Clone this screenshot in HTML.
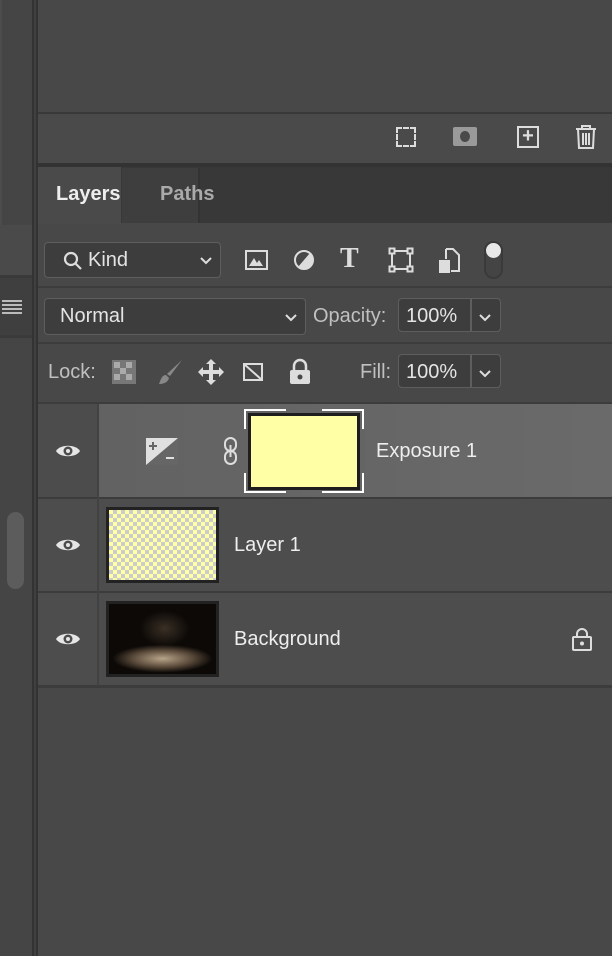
<!DOCTYPE html>
<html><head><style>
*{margin:0;padding:0;box-sizing:border-box}
body{width:612px;height:956px;background:#484848;position:relative;overflow:hidden;font-family:"Liberation Sans",sans-serif;color:#e6e6e6}
.a{position:absolute}
.drop{position:absolute;background:#3d3d3d;border:1px solid #5e5e5e;border-radius:4px}
.eye{position:absolute;left:55px;width:26px;height:16px}
.txt{font-size:18px;color:#e4e4e4}
</style></head><body>
<div class="a" style="left:0;top:0;width:32px;height:956px;background:#454545"></div>
<div class="a" style="left:0;top:0;width:2px;height:225px;background:#4c4c4c"></div>
<div class="a" style="left:0;top:225px;width:32px;height:50px;background:#4a4a4a"></div>
<div class="a" style="left:0;top:275px;width:32px;height:3px;background:#3a3a3a"></div>
<div class="a" style="left:0;top:278px;width:32px;height:57px;background:#3f3f3f"></div>
<div class="a" style="left:2px;top:300px;width:20px;height:14px;border-top:2px solid #bbb;border-bottom:2px solid #bbb"></div>
<div class="a" style="left:2px;top:304px;width:20px;height:6px;border-top:2px solid #bbb;border-bottom:2px solid #bbb"></div>
<div class="a" style="left:0;top:335px;width:32px;height:3px;background:#3a3a3a"></div>
<div class="a" style="left:7px;top:512px;width:17px;height:77px;border-radius:9px;background:#5c5c5c"></div>
<div class="a" style="left:32px;top:0;width:6px;height:956px;background:#333"></div>
<div class="a" style="left:34px;top:0;width:2px;height:956px;background:#404040"></div>
<div class="a" style="left:38px;top:112px;width:574px;height:2px;background:#393939"></div>
<div class="a" style="left:38px;top:114px;width:574px;height:49px;background:#4a4a4a"></div>
<div class="a" style="left:396px;top:127px;width:20px;height:20px;border:2px dashed #ddd"></div>
<div class="a" style="left:453px;top:127px;width:24px;height:19px;background:#9a9a9a;border-radius:2px"><div class="a" style="left:7px;top:4px;width:10px;height:11px;border-radius:50%;background:#4a4a4a"></div></div>
<div class="a" style="left:517px;top:126px;width:22px;height:22px;border:2px solid #ddd;color:#ddd;font-size:20px;font-weight:bold;line-height:17px;text-align:center">+</div>
<svg class="a" style="left:574px;top:124px" width="24" height="26" viewBox="0 0 24 26" fill="none" stroke="#ddd" stroke-width="2"><path d="M2 5h20M8 5V2h8v3M4 5l1 19h14l1-19M9 9v12M12 9v12M15 9v12"/></svg>
<div class="a" style="left:38px;top:163px;width:574px;height:4px;background:#333"></div>
<div class="a" style="left:38px;top:167px;width:574px;height:56px;background:#383838"></div>
<div class="a" style="left:38px;top:167px;width:83px;height:57px;background:#4a4a4a"></div>
<div class="a" style="left:122px;top:168px;width:78px;height:55px;background:#3e3e3e;border-right:2px solid #333"></div>
<div class="a" style="left:56px;top:183px;font-size:20px;font-weight:bold;color:#eee">Layers</div>
<div class="a" style="left:160px;top:183px;font-size:20px;font-weight:bold;color:#aaa">Paths</div>
<div class="drop" style="left:44px;top:242px;width:177px;height:36px"></div>
<svg class="a" style="left:62px;top:250px" width="22" height="22" viewBox="0 0 22 22" fill="none" stroke="#ddd" stroke-width="2.2"><circle cx="9" cy="9" r="6"/><path d="M13 13l6 6"/></svg>
<div class="a txt" style="left:88px;top:249px;font-size:20px">Kind</div>
<svg class="a" style="left:199px;top:256px" width="14" height="10"><path d="M2 2l5 5 5-5" fill="none" stroke="#ddd" stroke-width="2"/></svg>
<svg class="a" style="left:244px;top:248px" width="26" height="24"><rect x="2" y="3" width="21" height="18" fill="none" stroke="#ddd" stroke-width="2"/><path d="M5 18l5-8 3 5 2-3 4 6z" fill="#ddd"/></svg>
<svg class="a" style="left:292px;top:248px" width="24" height="24"><circle cx="12" cy="12" r="9" fill="none" stroke="#ddd" stroke-width="2"/><path d="M18 5A9 9 0 0 1 12 21 9 9 0 0 1 6 19z" fill="#ddd"/></svg>
<div class="a" style="left:340px;top:243px;font-family:'Liberation Serif',serif;font-size:28px;font-weight:bold;color:#ddd">T</div>
<svg class="a" style="left:388px;top:247px" width="26" height="26" fill="none" stroke="#ddd" stroke-width="2"><rect x="4" y="4" width="18" height="18"/><rect x="1.5" y="1.5" width="5" height="5" fill="#484848"/><rect x="19.5" y="1.5" width="5" height="5" fill="#484848"/><rect x="1.5" y="19.5" width="5" height="5" fill="#484848"/><rect x="19.5" y="19.5" width="5" height="5" fill="#484848"/></svg>
<svg class="a" style="left:437px;top:247px" width="26" height="28"><path d="M9 2h7l6 6v16H14" fill="none" stroke="#ddd" stroke-width="2"/><path d="M9 2v10" stroke="#ddd" stroke-width="2"/><rect x="2" y="13" width="11" height="13" fill="#ddd"/></svg>
<div class="a" style="left:484px;top:241px;width:19px;height:38px;border:2px solid #3a3a3a;border-radius:10px;background:#444"></div>
<div class="a" style="left:486px;top:243px;width:15px;height:15px;border-radius:50%;background:#e8e8e8"></div>
<div class="a" style="left:38px;top:286px;width:574px;height:2px;background:#3c3c3c"></div>
<div class="drop" style="left:44px;top:298px;width:262px;height:37px"></div>
<div class="a txt" style="left:60px;top:305px;font-size:20px">Normal</div>
<svg class="a" style="left:284px;top:313px" width="14" height="10"><path d="M2 2l5 5 5-5" fill="none" stroke="#ddd" stroke-width="2"/></svg>
<div class="a" style="left:313px;top:305px;font-size:20px;color:#c0c0c0">Opacity:</div>
<div class="drop" style="left:398px;top:298px;width:103px;height:34px"></div>
<div class="a" style="left:470px;top:299px;width:2px;height:32px;background:#5e5e5e"></div>
<div class="a txt" style="left:406px;top:305px;font-size:20px">100%</div>
<svg class="a" style="left:478px;top:313px" width="14" height="10"><path d="M2 2l5 5 5-5" fill="none" stroke="#ddd" stroke-width="2"/></svg>
<div class="a" style="left:38px;top:342px;width:574px;height:2px;background:#3c3c3c"></div>
<div class="a" style="left:48px;top:361px;font-size:20px;color:#c0c0c0">Lock:</div>
<svg class="a" style="left:112px;top:360px" width="24" height="24"><rect width="24" height="24" fill="#777"/><rect x="2" y="2" width="6" height="6" fill="#aaa"/><rect x="14" y="2" width="6" height="6" fill="#aaa"/><rect x="8" y="8" width="6" height="6" fill="#aaa"/><rect x="2" y="14" width="6" height="6" fill="#aaa"/><rect x="14" y="14" width="6" height="6" fill="#aaa"/></svg>
<svg class="a" style="left:156px;top:358px" width="28" height="28"><path d="M26 2L14 18l-3-2z" fill="#888"/><path d="M10 17c-4 0-5 4-7 9 5 0 9-2 10-6z" fill="#888"/></svg>
<svg class="a" style="left:197px;top:358px" width="28" height="28" fill="#ddd"><path d="M14 1l5 5h-3v6h6V9l5 5-5 5v-3h-6v6h3l-5 5-5-5h3v-6H6v3l-5-5 5-5v3h6V6H9z"/></svg>
<svg class="a" style="left:240px;top:358px" width="30" height="28" fill="none" stroke="#ddd" stroke-width="2"><path d="M4 6h18v16H4zM4 6l18 16"/></svg>
<svg class="a" style="left:288px;top:358px" width="24" height="28"><path d="M6 12V8a6 6 0 0 1 12 0v4" fill="none" stroke="#ddd" stroke-width="2.5"/><rect x="2" y="12" width="20" height="14" rx="2" fill="#ddd"/><circle cx="12" cy="19" r="2.5" fill="#484848"/></svg>
<div class="a" style="left:360px;top:361px;font-size:20px;color:#c0c0c0">Fill:</div>
<div class="drop" style="left:398px;top:354px;width:103px;height:34px"></div>
<div class="a" style="left:470px;top:355px;width:2px;height:32px;background:#5e5e5e"></div>
<div class="a txt" style="left:406px;top:361px;font-size:20px">100%</div>
<svg class="a" style="left:478px;top:369px" width="14" height="10"><path d="M2 2l5 5 5-5" fill="none" stroke="#ddd" stroke-width="2"/></svg>
<div class="a" style="left:38px;top:402px;width:574px;height:2px;background:#3c3c3c"></div>
<div class="a" style="left:38px;top:404px;width:60px;height:93px;background:#4c4c4c"></div>
<div class="a" style="left:98px;top:404px;width:514px;height:93px;background:linear-gradient(90deg,#626262,#6a6a6a)"></div>
<div class="a" style="left:38px;top:497px;width:574px;height:2px;background:#3c3c3c"></div>
<div class="a" style="left:38px;top:499px;width:574px;height:92px;background:#4d4d4d"></div>
<div class="a" style="left:38px;top:591px;width:574px;height:2px;background:#3c3c3c"></div>
<div class="a" style="left:38px;top:593px;width:574px;height:92px;background:#4d4d4d"></div>
<div class="a" style="left:38px;top:685px;width:574px;height:3px;background:#3c3c3c"></div>
<div class="a" style="left:97px;top:404px;width:2px;height:282px;background:#424242"></div>
<svg class="eye" style="top:443px" viewBox="0 0 26 16"><path d="M1 8C5 1 21 1 25 8 21 15 5 15 1 8z" fill="#e6e6e6"/><circle cx="13" cy="8" r="4.5" fill="#4c4c4c"/><circle cx="13" cy="8" r="2" fill="#e6e6e6"/></svg>
<svg class="eye" style="top:537px" viewBox="0 0 26 16"><path d="M1 8C5 1 21 1 25 8 21 15 5 15 1 8z" fill="#e6e6e6"/><circle cx="13" cy="8" r="4.5" fill="#4d4d4d"/><circle cx="13" cy="8" r="2" fill="#e6e6e6"/></svg>
<svg class="eye" style="top:631px" viewBox="0 0 26 16"><path d="M1 8C5 1 21 1 25 8 21 15 5 15 1 8z" fill="#e6e6e6"/><circle cx="13" cy="8" r="4.5" fill="#4d4d4d"/><circle cx="13" cy="8" r="2" fill="#e6e6e6"/></svg>
<svg class="a" style="left:146px;top:438px" width="32" height="27"><rect width="32" height="27" fill="#e0e0e0"/><path d="M32 0L0 27h32z" fill="#666"/><path d="M3 8h8M7 4v8" stroke="#666" stroke-width="2"/><path d="M20 20h8" stroke="#e0e0e0" stroke-width="2"/></svg>
<svg class="a" style="left:222px;top:436px" width="18" height="30"><rect x="3" y="2" width="11" height="13" rx="5.5" fill="none" stroke="#ddd" stroke-width="2"/><rect x="3" y="15" width="11" height="13" rx="5.5" fill="none" stroke="#ddd" stroke-width="2"/><path d="M8.5 9v12" stroke="#ddd" stroke-width="2"/></svg>
<div class="a" style="left:244px;top:409px;width:120px;height:84px;border:2px solid #fff"></div>
<div class="a" style="left:286px;top:407px;width:36px;height:88px;background:linear-gradient(90deg,#656565,#666)"></div>
<div class="a" style="left:242px;top:429px;width:124px;height:44px;background:#646464"></div>
<div class="a" style="left:248px;top:413px;width:112px;height:77px;background:#ffffa6;border:3px solid #1e1e1e"></div>
<div class="a" style="left:376px;top:440px;font-size:20px;color:#eee">Exposure 1</div>
<div class="a" style="left:106px;top:507px;width:113px;height:76px;border:3px solid #222;background-color:#ffffa6;background-image:linear-gradient(45deg,#ccc 25%,transparent 25%,transparent 75%,#ccc 75%),linear-gradient(45deg,#ccc 25%,transparent 25%,transparent 75%,#ccc 75%);background-size:8px 8px;background-position:0 0,4px 4px"></div>
<div class="a" style="left:234px;top:534px;font-size:20px;color:#eee">Layer 1</div>
<div class="a" style="left:106px;top:601px;width:113px;height:76px;border:3px solid #222;background:radial-gradient(ellipse 50px 14px at 50% 78%,#b8a48a,#5a4a3a 60%,transparent),radial-gradient(ellipse 25px 18px at 52% 35%,#3a3025,transparent),#0c0907"></div>
<div class="a" style="left:234px;top:628px;font-size:20px;color:#eee">Background</div>
<svg class="a" style="left:571px;top:627px" width="22" height="24"><path d="M6 10V7a5 5 0 0 1 10 0v3" fill="none" stroke="#ddd" stroke-width="2"/><rect x="2" y="10" width="18" height="13" rx="1" fill="none" stroke="#ddd" stroke-width="2"/><circle cx="11" cy="16.5" r="2" fill="#ddd"/></svg>
</body></html>
